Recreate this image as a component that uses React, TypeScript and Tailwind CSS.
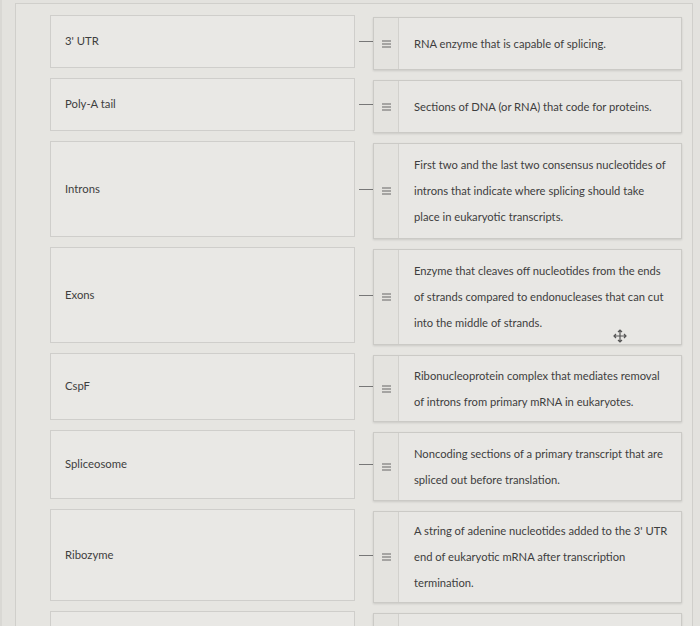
import React from 'react';

type Pair = {
  term: string;
  definition: string[];
  h: string;
};

const pairs: Pair[] = [
  { term: "3' UTR", definition: ['RNA enzyme that is capable of splicing.'], h: 'h-[53px]' },
  { term: 'Poly-A tail', definition: ['Sections of DNA (or RNA) that code for proteins.'], h: 'h-[53px]' },
  {
    term: 'Introns',
    definition: [
      'First two and the last two consensus nucleotides of',
      'introns that indicate where splicing should take',
      'place in eukaryotic transcripts.',
    ],
    h: 'h-[96px]',
  },
  {
    term: 'Exons',
    definition: [
      'Enzyme that cleaves off nucleotides from the ends',
      'of strands compared to endonucleases that can cut',
      'into the middle of strands.',
    ],
    h: 'h-[96px]',
  },
  {
    term: 'CspF',
    definition: [
      'Ribonucleoprotein complex that mediates removal',
      'of introns from primary mRNA in eukaryotes.',
    ],
    h: 'h-[67px]',
  },
  {
    term: 'Spliceosome',
    definition: [
      'Noncoding sections of a primary transcript that are',
      'spliced out before translation.',
    ],
    h: 'h-[69px]',
  },
  {
    term: 'Ribozyme',
    definition: [
      "A string of adenine nucleotides added to the 3' UTR",
      'end of eukaryotic mRNA after transcription',
      'termination.',
    ],
    h: 'h-[92px]',
  },
  { term: '', definition: [], h: 'h-[40px]' },
];

function Handle() {
  return (
    <svg width="9" height="8" viewBox="0 0 9 8" className="text-[#666]">
      <path d="M0 1h9M0 4h9M0 7h9" stroke="currentColor" strokeWidth="1.1" />
    </svg>
  );
}

function MoveCursor() {
  return (
    <svg width="14" height="14" viewBox="0 0 14 14" className="absolute right-[54px] bottom-[1px] text-[#555]">
      <path d="M7 1v12M1 7h12M5 3l2-2 2 2M5 11l2 2 2-2M3 5L1 7l2 2M11 5l2 2-2 2" stroke="currentColor" strokeWidth="1.2" fill="none" />
    </svg>
  );
}

export default function App() {
  return (
    <div className="w-[700px] h-[626px] overflow-hidden bg-[#d9d8d4] pl-[2px]" style={{ fontFamily: 'Lato, "Open Sans", sans-serif' }}>
      <div className="h-full bg-[#e3e2de] pl-[13px] pt-[3px]">
        <div className="h-full mr-[7px] border-l border-r border-t border-[#d0cfcb] bg-[#e6e5e1] pt-[11px] flex flex-col gap-[10px]">
          {pairs.map((p, i) => (
            <div key={i} className={`flex items-stretch shrink-0 ${p.h}`}>
              <div className="ml-[34px] w-[305px] border border-[#cfcecb] bg-[#e9e8e5] flex items-center pl-[14px] text-[11.3px] text-[#3e3e3e]">
                {p.term}
              </div>
              <div className="w-[18px] flex items-center">
                {p.term && <div className="ml-[4px] w-[14px] h-px bg-[#777]" />}
              </div>
              <div className="relative w-[309px] mt-[2px] -mb-[2px] border border-[#cbcac6] bg-[#e8e7e4] shadow-[0_1px_2px_rgba(0,0,0,0.12)] flex">
                <div className="w-[25px] shrink-0 border-r border-[#d2d1cd] bg-[#e4e3df] flex items-center justify-center">
                  {p.term && <Handle />}
                </div>
                <div className={`flex flex-col justify-center pl-[15px] text-[11.2px] text-[#3e3e3e] ${p.definition.length > 1 ? 'leading-[26px]' : 'leading-[16px]'}`}>
                  {p.definition.map((line, j) => (
                    <span key={j}>{line}</span>
                  ))}
                </div>
                {i === 3 && <MoveCursor />}
              </div>
            </div>
          ))}
        </div>
      </div>
    </div>
  );
}
